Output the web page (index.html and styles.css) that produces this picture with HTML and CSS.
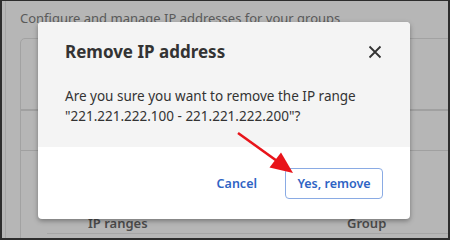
FILE: index.html
```html
<!DOCTYPE html>
<html lang="en">
<head>
  <meta charset="UTF-8" />
  <title>Remove IP address</title>
  <link rel="stylesheet" href="styles.css">
</head>
<body>

  <div class="screen">
    <div class="page">
      <p class="intro">Configure and manage IP addresses for your groups</p>
      <div class="card">
        <div class="card-row first"></div>
        <div class="card-row second"></div>
        <div class="table-head">
          <span class="col-range">IP ranges</span>
          <span class="col-group">Group</span>
        </div>
      </div>
    </div>

    <div class="dialog">
      <div class="dialog-main">
        <div class="dialog-title">
          <h2>Remove IP address</h2>
          <button class="close" aria-label="Close">
            <svg width="14" height="14" viewBox="0 0 14 14">
              <path d="M1.5 1.5 L12.5 12.5 M12.5 1.5 L1.5 12.5" stroke="#333" stroke-width="1.8" fill="none" />
            </svg>
          </button>
        </div>
        <p class="dialog-text">Are you sure you want to remove the IP range "221.221.222.100 - 221.221.222.200"?</p>
      </div>
      <div class="dialog-actions">
        <button class="btn-link">Cancel</button>
        <button class="btn-outline">Yes, remove</button>
      </div>
    </div>

    <!-- annotation arrow -->
    <svg class="arrow" width="450" height="240" viewBox="0 0 450 240">
      <line x1="238" y1="133" x2="277" y2="161" stroke="#e8141a" stroke-width="2.6" />
      <polygon points="293,173 269.5,167.5 281,152.5" fill="#e8141a" />
    </svg>
  </div>

</body>
</html>
```

FILE: styles.css
```css
body {
  margin: 0;
  padding: 0;
  font-family: 'Noto Sans', 'Open Sans', sans-serif;
}

.screen {
  position: relative;
  width: 450px;
  height: 240px;
  box-sizing: border-box;
  border: 2px solid #2d2d2d;
  border-top-width: 1px;
  background-color: #b6b6b6;
  overflow: hidden;
}

.page {
  height: 100%;
  margin-left: 3px;
  padding-left: 14px;
  border-left: 1px solid #a6a6a6;
}

.intro {
  margin: 0;
  padding-top: 8px;
  font-size: 13px;
  line-height: 18px;
  color: #5a5a5a;
}

.card {
  margin-top: 11px;
  margin-right: -20px;
  border: 1px solid #a2a2a2;
  border-radius: 5px 0 0 0;
  height: 300px;
}

.card-row {
  border-bottom: 2px solid #a0a0a0;
}

.card-row.first {
  height: 70px;
}

.card-row.second {
  height: 39px;
  border-bottom-width: 1px;
}

.table-head {
  display: flex;
  margin: 64px 0 0 26px;
  padding-left: 41px;
  height: 18px;
  border-bottom: 1px solid #a6a6a6;
  font-size: 13px;
  font-weight: 600;
  line-height: 16px;
  color: #4c4c4c;
}

.col-range {
  width: 259px;
}

.dialog {
  position: absolute;
  left: 36px;
  top: 21px;
  width: 372px;
  height: 197px;
  display: flex;
  flex-direction: column;
  border-radius: 4px;
  overflow: hidden;
  background-color: #fff;
  box-shadow: 0 2px 5px rgba(0, 0, 0, 0.35);
}

.dialog-main {
  height: 125px;
  box-sizing: border-box;
  padding: 18px 24px 0 27px;
  background-color: #f4f4f4;
}

.dialog-title {
  display: flex;
  align-items: center;
  justify-content: space-between;
}

.dialog-title h2 {
  margin: 0;
  font-size: 17px;
  font-weight: 700;
  line-height: 24px;
  color: #333;
}

.close {
  display: flex;
  padding: 4px;
  border: none;
  background: none;
}

.dialog-text {
  margin: 22px 0 0;
  font-size: 13.5px;
  line-height: 20px;
  color: #333;
}

.dialog-actions {
  flex: 1;
  display: flex;
  align-items: center;
  justify-content: flex-end;
  gap: 18px;
  padding-right: 27px;
}

.btn-link,
.btn-outline {
  font-family: inherit;
  font-size: 12.5px;
  font-weight: 600;
  color: #2f64c4;
  background: #fff;
  cursor: pointer;
}

.btn-link {
  border: none;
  padding: 6px 10px;
}

.btn-outline {
  width: 98px;
  height: 31px;
  border: 1px solid #8aabe4;
  border-radius: 4px;
}

.arrow {
  position: absolute;
  left: -2px;
  top: -1px;
}
```
